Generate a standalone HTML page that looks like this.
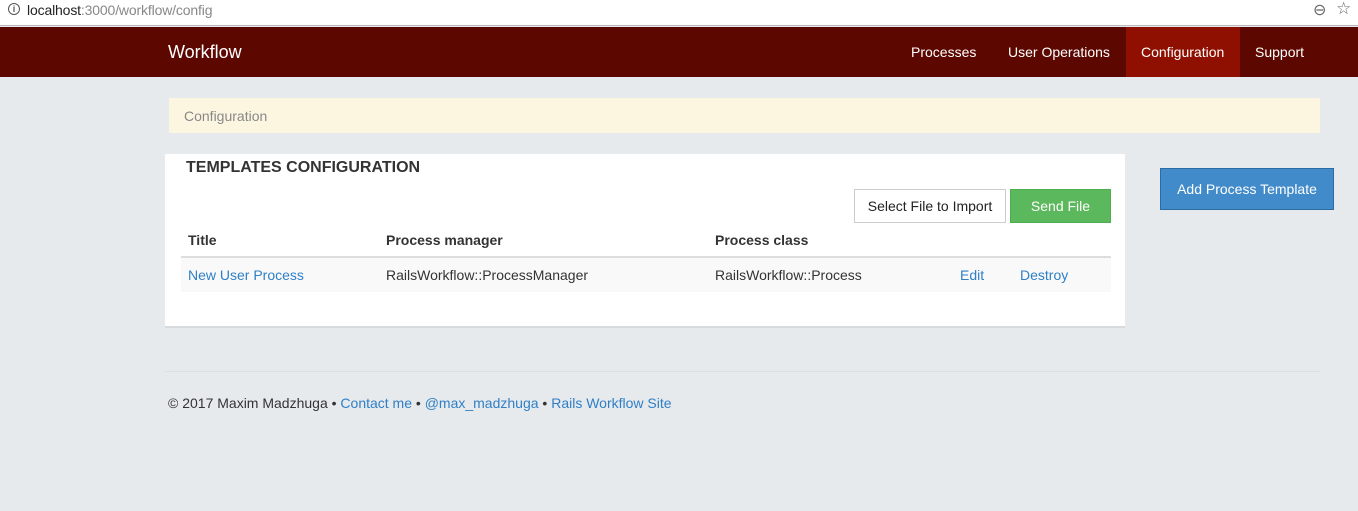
<!DOCTYPE html>
<html><head><style>
*{margin:0;padding:0;box-sizing:border-box}
body{width:1358px;height:511px;background:#e7eaed;font-family:"Liberation Sans",sans-serif;font-size:14px;color:#333;position:relative;overflow:hidden}
.a{position:absolute;white-space:nowrap}
a{color:#2f7fc6;text-decoration:none}
</style></head><body>
<div class="a" style="left:0;top:0;width:1358px;height:26px;background:#fff;border-bottom:1px solid #bbb"></div>
<div class="a" style="left:8px;top:3px;width:12px;height:12px;border:1.3px solid #555;border-radius:50%;font-size:9px;line-height:10px;text-align:center;color:#555;font-weight:bold">i</div>
<div class="a" style="left:27px;top:2px;font-size:14px;color:#222;letter-spacing:-0.15px">localhost<span style="color:#888">:3000/workflow/config</span></div>
<div class="a" style="left:1313px;top:0px;font-size:16px;color:#666">⊖</div>
<div class="a" style="left:1336px;top:-1px;font-size:17px;color:#666">☆</div>
<div class="a" style="left:0;top:27px;width:1358px;height:50px;background:#5c0700"></div>
<div class="a" style="left:1126px;top:27px;width:114px;height:50px;background:#8f1000"></div>
<div class="a" style="left:168px;top:42px;font-size:18px;color:#fff">Workflow</div>
<div class="a" style="left:911px;top:44px;color:#fff">Processes</div>
<div class="a" style="left:1008px;top:44px;color:#fff">User Operations</div>
<div class="a" style="left:1141px;top:44px;color:#fff">Configuration</div>
<div class="a" style="left:1255px;top:44px;color:#fff">Support</div>
<div class="a" style="left:169px;top:98px;width:1151px;height:35px;background:#fcf6e1"></div>
<div class="a" style="left:184px;top:108px;color:#888">Configuration</div>
<div class="a" style="left:165px;top:154px;width:960px;height:174px;background:#fff;border-bottom:2px solid #d8dbde"></div>
<div class="a" style="left:186px;top:159px;font-size:16px;font-weight:bold;color:#333">TEMPLATES CONFIGURATION</div>
<div class="a" style="left:854px;top:189px;width:152px;height:34px;border:1px solid #ccc;background:#fff;text-align:center;line-height:32px;color:#222">Select File to Import</div>
<div class="a" style="left:1010px;top:189px;width:101px;height:34px;border:1px solid #4cae4c;background:#5cb85c;text-align:center;line-height:32px;color:#fff">Send File</div>
<div class="a" style="left:188px;top:232px;font-weight:bold">Title</div>
<div class="a" style="left:386px;top:232px;font-weight:bold">Process manager</div>
<div class="a" style="left:715px;top:232px;font-weight:bold">Process class</div>
<div class="a" style="left:181px;top:256px;width:930px;height:36px;background:#f9f9f9;border-top:2px solid #ddd"></div>
<div class="a" style="left:188px;top:267px"><a>New User Process</a></div>
<div class="a" style="left:386px;top:267px">RailsWorkflow::ProcessManager</div>
<div class="a" style="left:715px;top:267px">RailsWorkflow::Process</div>
<div class="a" style="left:960px;top:267px"><a>Edit</a></div>
<div class="a" style="left:1020px;top:267px"><a>Destroy</a></div>
<div class="a" style="left:1160px;top:168px;width:174px;height:42px;background:#428bca;border:1px solid #2d6ca2;text-align:center;line-height:40px;color:#fff">Add Process Template</div>
<div class="a" style="left:165px;top:371px;width:1155px;height:1px;background:#dde0e3"></div>
<div class="a" style="left:168px;top:395px">© 2017 Maxim Madzhuga • <a>Contact me</a> • <a>@max_madzhuga</a> • <a>Rails Workflow Site</a></div>
</body></html>
